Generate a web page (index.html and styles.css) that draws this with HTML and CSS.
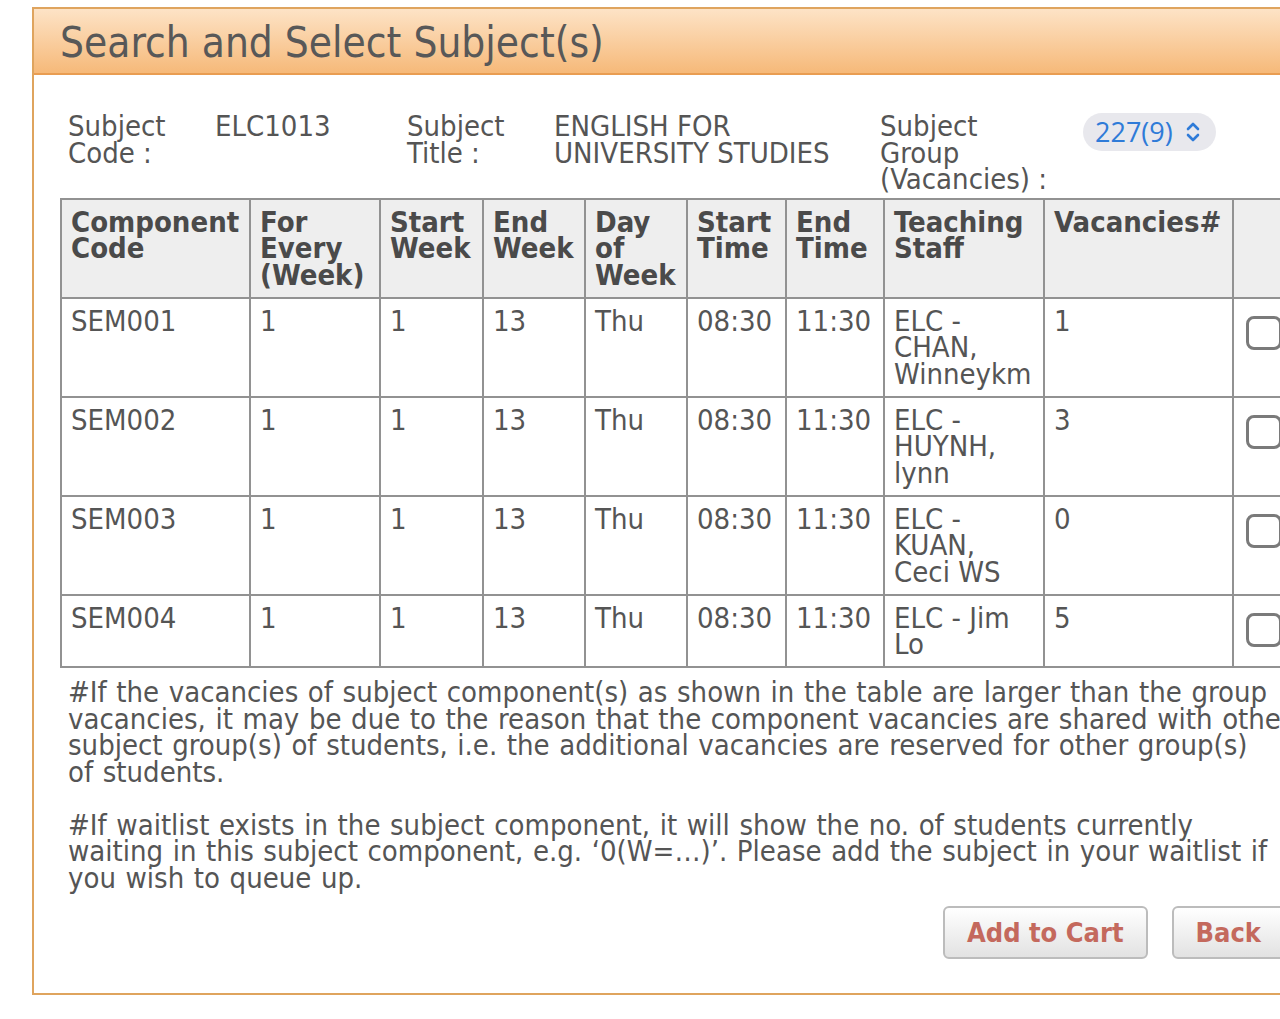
FILE: index.html
```
<!DOCTYPE html>
<html>
<head>
  <title>Search and Select Subject(s)</title>
  <link rel="stylesheet" href="styles.css">
</head>
<body>
  <div class="panel">
    <div class="panel-head">Search and Select Subject(s)</div>

    <div class="panel-body">
      <div class="info-row">
        <div class="info-label">Subject Code :</div>
        <div class="info-code">ELC1013</div>
        <div class="info-label">Subject Title :</div>
        <div class="info-title">ENGLISH FOR UNIVERSITY STUDIES</div>
        <div class="info-group">Subject Group (Vacancies) :</div>
        <div class="group-select">
          <span>227(9)</span>
          <svg width="16" height="22" viewBox="0 0 16 22">
            <path d="M3 8 L8 3 L13 8 M3 14 L8 19 L13 14" fill="none" stroke="#2f7bd8" stroke-width="2.6" stroke-linecap="round" stroke-linejoin="round"/>
          </svg>
        </div>
      </div>

      <table class="comp-table">
        <colgroup>
          <col style="width:189px">
          <col style="width:130px">
          <col style="width:103px">
          <col style="width:102px">
          <col style="width:102px">
          <col style="width:99px">
          <col style="width:98px">
          <col style="width:160px">
          <col style="width:189px">
          <col style="width:80px">
        </colgroup>
        <tr>
          <th>Component Code</th>
          <th>For Every (Week)</th>
          <th>Start Week</th>
          <th>End Week</th>
          <th>Day of Week</th>
          <th>Start Time</th>
          <th>End Time</th>
          <th>Teaching Staff</th>
          <th>Vacancies#</th>
          <th></th>
        </tr>
        <tr>
          <td>SEM001</td><td>1</td><td>1</td><td>13</td><td>Thu</td>
          <td>08:30</td><td>11:30</td><td>ELC - CHAN, Winneykm</td><td>1</td>
          <td><span class="check"></span></td>
        </tr>
        <tr>
          <td>SEM002</td><td>1</td><td>1</td><td>13</td><td>Thu</td>
          <td>08:30</td><td>11:30</td><td>ELC - HUYNH, lynn</td><td>3</td>
          <td><span class="check"></span></td>
        </tr>
        <tr>
          <td>SEM003</td><td>1</td><td>1</td><td>13</td><td>Thu</td>
          <td>08:30</td><td>11:30</td><td>ELC - KUAN, Ceci WS</td><td>0</td>
          <td><span class="check"></span></td>
        </tr>
        <tr>
          <td>SEM004</td><td>1</td><td>1</td><td>13</td><td>Thu</td>
          <td>08:30</td><td>11:30</td><td>ELC - Jim Lo</td><td>5</td>
          <td><span class="check"></span></td>
        </tr>
      </table>

      <div class="notes">
        #If the vacancies of subject component(s) as shown in the table are larger than the group vacancies, it may be due to the reason that the component vacancies are shared with other subject group(s) of students, i.e. the additional vacancies are reserved for other group(s) of&nbsp;students.
        <br><br>
        #If waitlist exists in the subject component, it will show the no. of students currently waiting in this subject component, e.g. &lsquo;0(W=&hellip;)&rsquo;. Please add the subject in your waitlist if you wish to queue up.
      </div>

      <div class="actions">
        <button class="btn">Add to Cart</button>
        <button class="btn">Back</button>
      </div>
    </div>
  </div>
</body>
</html>
```

FILE: styles.css
```
body {
  margin: 0;
  background-color: #ffffff;
  font-family: 'DejaVu Sans Condensed', 'DejaVu Sans', sans-serif;
  color: #555555;
  overflow: hidden;
}

.panel {
  margin: 7px 0 0 32px;
  width: 1320px;
  border: 2px solid #dfa45e;
  background-color: #ffffff;
}

.panel-head {
  height: 64px;
  line-height: 68px;
  padding-left: 26px;
  font-size: 42px;
  color: #585858;
  background: linear-gradient(#fde3c6, #f6b979);
  border-bottom: 2px solid #e99d52;
}

.panel-body {
  padding: 38px 0 34px 26px;
  font-size: 29px;
  line-height: 26.5px;
}

.info-row {
  display: flex;
  align-items: flex-start;
  padding-left: 8px;
  margin-bottom: 5px;
}

.info-label {
  width: 147px;
}

.info-code {
  width: 192px;
}

.info-title {
  width: 326px;
}

.info-group {
  width: 180px;
  margin-right: 23px;
}

.group-select {
  display: flex;
  align-items: center;
  gap: 12px;
  height: 38px;
  padding: 0 15px 0 12px;
  border-radius: 19px;
  background-color: #e8e8ed;
  color: #2f7bd8;
  font-family: 'Open Sans', sans-serif;
  font-size: 27px;
}

.comp-table {
  table-layout: fixed;
  border-collapse: collapse;
  width: 1252px;
}

.comp-table th,
.comp-table td {
  border: 2px solid #929292;
  padding: 9px 8px 8.5px 9px;
  text-align: left;
  vertical-align: top;
}

.comp-table th {
  background-color: #eeeeee;
  color: #4a4a4a;
  font-weight: bold;
}

.check {
  display: block;
  width: 36px;
  height: 34px;
  margin: 8px 0 0 3px;
  border: 3px solid #7a7a7a;
  border-radius: 8px;
  box-sizing: border-box;
}

.notes {
  width: 1228px;
  padding: 11px 0 0 8px;
  word-spacing: 1.3px;
}

.actions {
  display: flex;
  justify-content: flex-end;
  gap: 24px;
  margin-top: 15px;
  width: 1225px;
}

.btn {
  height: 53px;
  padding: 0 22px;
  font-family: 'DejaVu Sans Condensed', 'DejaVu Sans', sans-serif;
  font-size: 27px;
  font-weight: bold;
  color: #c4695d;
  background: linear-gradient(#ffffff, #e2e2e2);
  border: 2px solid #bcbcbc;
  border-radius: 6px;
}
```
